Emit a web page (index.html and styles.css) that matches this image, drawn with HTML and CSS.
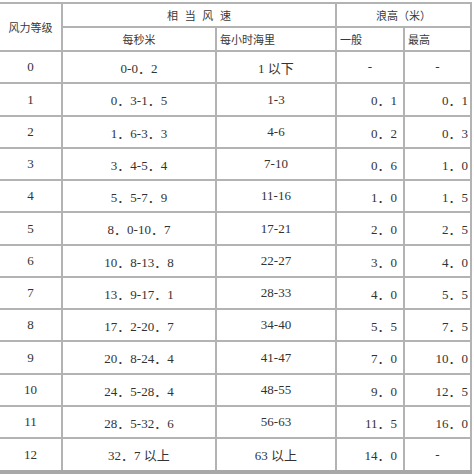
FILE: index.html
```html
<!DOCTYPE html>
<html lang="zh">
<head>
<meta charset="utf-8">
<link rel="stylesheet" href="styles.css">
</head>
<body>
<table class="wind">
  <colgroup>
    <col class="c1"><col class="c2"><col class="c3"><col class="c4"><col class="c5">
  </colgroup>
  <thead>
    <tr class="h1">
      <th rowspan="2" class="lvl">风力等级</th>
      <th colspan="2" class="spaced">相当风速</th>
      <th colspan="2">浪高（米）</th>
    </tr>
    <tr class="h2">
      <th>每秒米</th>
      <th class="left">每小时海里</th>
      <th class="left">一般</th>
      <th class="left">最高</th>
    </tr>
  </thead>
  <tbody>
    <tr><td>0</td><td>0-0．2</td><td>1 以下</td><td class="mid">-</td><td class="mid">-</td></tr>
    <tr class="t"><td>1</td><td>0．3-1．5</td><td>1-3</td><td class="r4">0．1</td><td class="r5">0．1</td></tr>
    <tr><td>2</td><td>1．6-3．3</td><td>4-6</td><td class="r4">0．2</td><td class="r5">0．3</td></tr>
    <tr><td>3</td><td>3．4-5．4</td><td>7-10</td><td class="r4">0．6</td><td class="r5">1．0</td></tr>
    <tr><td>4</td><td>5．5-7．9</td><td>11-16</td><td class="r4">1．0</td><td class="r5">1．5</td></tr>
    <tr class="t"><td>5</td><td>8．0-10．7</td><td>17-21</td><td class="r4">2．0</td><td class="r5">2．5</td></tr>
    <tr><td>6</td><td>10．8-13．8</td><td>22-27</td><td class="r4">3．0</td><td class="r5">4．0</td></tr>
    <tr><td>7</td><td>13．9-17．1</td><td>28-33</td><td class="r4">4．0</td><td class="r5">5．5</td></tr>
    <tr><td>8</td><td>17．2-20．7</td><td>34-40</td><td class="r4">5．5</td><td class="r5">7．5</td></tr>
    <tr class="t"><td>9</td><td>20．8-24．4</td><td>41-47</td><td class="r4">7．0</td><td class="r5">10．0</td></tr>
    <tr><td>10</td><td>24．5-28．4</td><td>48-55</td><td class="r4">9．0</td><td class="r5">12．5</td></tr>
    <tr><td>11</td><td>28．5-32．6</td><td>56-63</td><td class="r4">11．5</td><td class="r5">16．0</td></tr>
    <tr class="last"><td>12</td><td>32．7 以上</td><td>63 以上</td><td class="r4">14．0</td><td class="mid">-</td></tr>
  </tbody>
</table>
</body>
</html>
```
FILE: styles.css
```css
html, body {
  margin: 0;
  padding: 0;
  background: #ffffff;
  overflow: hidden;
}
body {
  width: 474px;
  height: 474px;
}
.wind {
  border-collapse: collapse;
  table-layout: fixed;
  width: 474px;
  margin: 2px 0 0 -2px;
  font-family: "Liberation Serif", "Noto Sans CJK SC", serif;
  font-size: 13px;
  color: #333333;
}
.c1 { width: 63px; }
.c2 { width: 154px; }
.c3 { width: 120px; }
.c4 { width: 68px; }
.c5 { width: 67px; }
.wind th, .wind td {
  border: 2px solid #b3b3b3;
  padding: 0;
  text-align: center;
  vertical-align: middle;
  white-space: nowrap;
  overflow: hidden;
}
.wind tbody tr.last td {
  border-bottom: 6px solid #a8a8a8;
}
.wind th {
  font-family: "Noto Sans CJK SC", sans-serif;
  font-weight: normal;
  font-size: 11px;
  color: #383838;
}
.h1 { height: 24px; }
.h2 { height: 24px; }
.wind tbody tr { height: 32px; }
.wind tbody tr.t { height: 33px; }
.wind tbody tr.last { height: 35px; }
.spaced { letter-spacing: 0.6em; text-indent: 0.6em; }
.left { text-align: left !important; padding-left: 3px !important; }
.lvl { text-align: center; }
.r4 { text-align: right !important; padding-right: 6px !important; }
.r5 { text-align: right !important; padding-right: 2px !important; }
.mid { text-align: center; }
```
